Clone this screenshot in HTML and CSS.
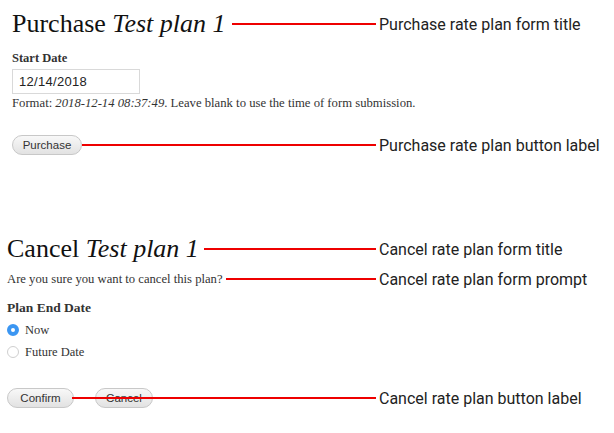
FILE: index.html
```html
<!DOCTYPE html>
<html>
<head>
<meta charset="utf-8">
<link rel="stylesheet" href="styles.css">
</head>
<body>
<div class="page">
  <section class="purchase">
    <div class="row title-row">
      <h1 class="title">Purchase <em>Test plan 1</em></h1>
      <span class="line"></span>
      <span class="note">Purchase rate plan form title</span>
    </div>
    <div class="field-label">Start Date</div>
    <div class="input">12/14/2018</div>
    <div class="help">Format: <em>2018-12-14 08:37:49</em>. Leave blank to use the time of form submission.</div>
    <div class="row btn-row">
      <span class="btn btn-purchase">Purchase</span>
      <span class="line"></span>
      <span class="note">Purchase rate plan button label</span>
    </div>
  </section>

  <section class="cancel">
    <div class="row title-row2">
      <h1 class="title">Cancel <em>Test plan 1</em></h1>
      <span class="line"></span>
      <span class="note">Cancel rate plan form title</span>
    </div>
    <div class="row prompt-row">
      <span class="prompt">Are you sure you want to cancel this plan?</span>
      <span class="line"></span>
      <span class="note">Cancel rate plan form prompt</span>
    </div>
    <div class="field-label plan-label">Plan End Date</div>
    <div class="radio-row"><span class="radio checked"></span><span class="radio-text">Now</span></div>
    <div class="radio-row"><span class="radio"></span><span class="radio-text">Future Date</span></div>
    <div class="row final-row">
      <div class="buttons">
        <span class="btn btn-confirm">Confirm</span>
        <span class="btn btn-cancel">Cancel</span>
      </div>
      <span class="spacer"></span>
      <span class="note">Cancel rate plan button label</span>
      <span class="line overlay-line"></span>
    </div>
  </section>
</div>
</body>
</html>
```

FILE: styles.css
```css
html, body {
  margin: 0;
  padding: 0;
  background: #ffffff;
}
.page {
  width: 614px;
  height: 433px;
  font-family: Georgia, "Liberation Serif", serif;
  color: #333;
  overflow: hidden;
}
.row {
  display: flex;
  align-items: center;
}
.line {
  flex: 1;
  height: 2px;
  background: #ee0000;
  margin-right: 3px;
}
.note {
  width: 235px;
  font-family: Roboto, "Open Sans", sans-serif;
  font-size: 16px;
  color: #222;
  white-space: nowrap;
}
.title {
  margin: 0;
  font-family: Georgia, "Liberation Serif", serif;
  font-weight: normal;
  font-size: 26px;
  color: #111;
  white-space: nowrap;
}
.title em {
  font-style: italic;
}
.purchase {
  padding-left: 12px;
}
.title-row {
  height: 24px;
  margin-top: 12px;
}
.title-row .line {
  margin-left: 6px;
}
.field-label {
  font-weight: bold;
  font-size: 12.5px;
  color: #333;
  margin-top: 15px;
  line-height: 14px;
}
.input {
  width: 120px;
  height: 23px;
  border: 1px solid #d9d9d9;
  margin-top: 4px;
  padding-left: 6px;
  font-family: "Liberation Sans", Arial, sans-serif;
  font-size: 13px;
  letter-spacing: 0.3px;
  line-height: 23px;
  color: #222;
}
.help {
  font-size: 12.7px;
  line-height: 14px;
  margin-top: 2px;
  color: #333;
  white-space: nowrap;
}
.btn {
  display: inline-flex;
  align-items: center;
  justify-content: center;
  box-sizing: border-box;
  height: 20px;
  border: 1px solid #c8c8c8;
  border-radius: 10px;
  background: linear-gradient(#f8f8f8, #e2e2e2);
  font-family: "Liberation Sans", Arial, sans-serif;
  font-size: 11.5px;
  color: #333;
}
.btn-row {
  margin-top: 25px;
  height: 20px;
}
.btn-purchase {
  width: 70px;
}
.cancel {
  padding-left: 7px;
  margin-top: 81px;
}
.title-row2 {
  height: 26px;
}
.title-row2 .line {
  margin-left: 5px;
}
.prompt-row {
  margin-top: 9px;
  height: 16px;
}
.prompt {
  font-size: 12.65px;
  color: #333;
  white-space: nowrap;
}
.prompt-row .line {
  margin-left: 3px;
}
.plan-label {
  font-size: 13.5px;
  margin-top: 14px;
}
.radio-row {
  display: flex;
  align-items: center;
  height: 14px;
  margin-top: 8px;
}
.radio-row + .radio-row {
  margin-top: 8px;
}
.radio {
  width: 12px;
  height: 12px;
  box-sizing: border-box;
  border-radius: 50%;
  border: 1px solid #cfcfcf;
  background: #fff;
  margin-right: 6px;
}
.radio.checked {
  border: 4px solid #3b96f2;
  background: #fff;
}
.radio-text {
  font-size: 12.5px;
  color: #333;
}
.final-row {
  position: relative;
  margin-top: 29px;
  height: 20px;
}
.buttons {
  display: flex;
  gap: 21px;
}
.btn-confirm {
  width: 67px;
}
.btn-cancel {
  width: 58px;
}
.spacer {
  flex: 1;
}
.overlay-line {
  position: absolute;
  left: 65px;
  right: 238px;
  top: 9px;
  height: 2px;
  margin: 0;
}
```
